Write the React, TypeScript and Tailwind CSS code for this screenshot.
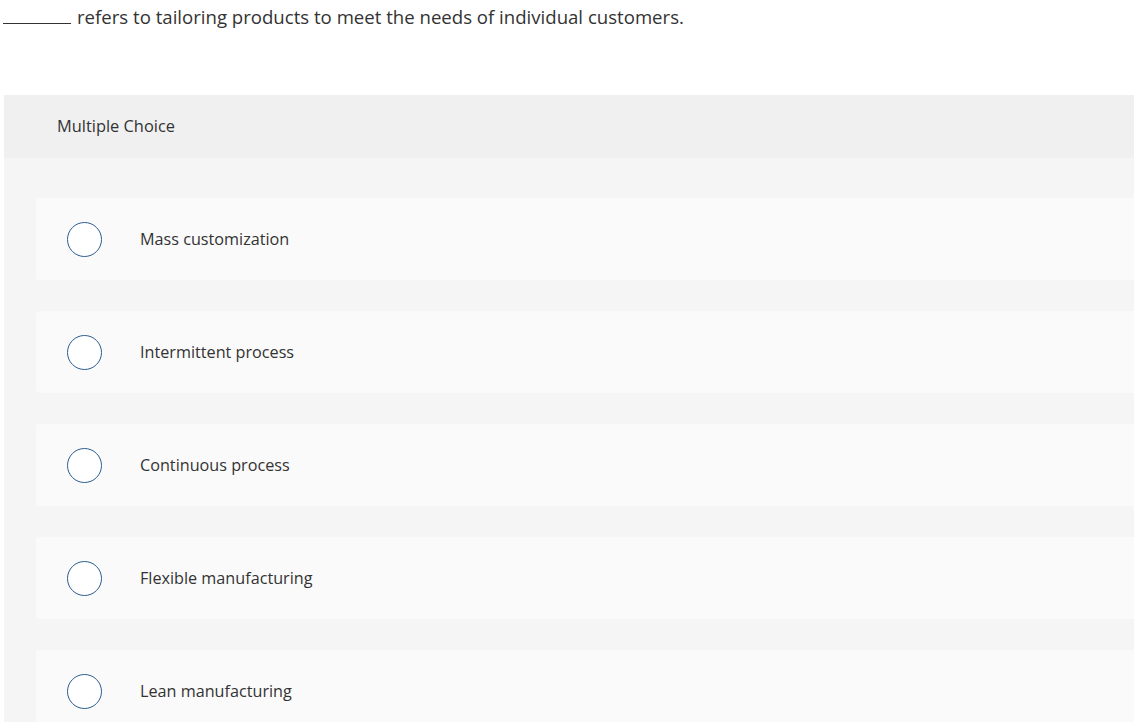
import React from 'react';

const OPTIONS = [
  'Mass customization',
  'Intermittent process',
  'Continuous process',
  'Flexible manufacturing',
  'Lean manufacturing',
];

const Radio: React.FC = () => (
  <span className="block w-[35px] h-[35px] rounded-full border border-[#2c5d8f] bg-white shrink-0" />
);

export default function App() {
  return (
    <div
      className="w-[1134px] h-[722px] overflow-hidden bg-white text-[#333]"
      style={{ fontFamily: '"Open Sans", "Liberation Sans", sans-serif' }}
    >
      <p className="pt-[5px] pl-[3px] text-[18.6px] leading-[24px] text-[#333]">
        <span className="inline-block w-[68px] h-px bg-[#333] align-baseline" />
        <span className="ml-[6px]">refers to tailoring products to meet the needs of individual customers.</span>
      </p>

      <div className="mt-[66px] ml-[4px] w-[1160px]">
        <div className="h-[63px] bg-[#f0f0f0] flex items-center pl-[53px] text-[16.4px]">
          Multiple Choice
        </div>
        <div className="bg-[#f5f5f5] pt-[40px] pl-[32px] flex flex-col gap-[31px]">
          {OPTIONS.map((opt) => (
            <div
              key={opt}
              className="h-[82px] bg-[#fafafa] rounded-[4px] flex items-center pl-[31px]"
            >
              <Radio />
              <span className="ml-[38px] text-[16.2px]">{opt}</span>
            </div>
          ))}
        </div>
      </div>
    </div>
  );
}
